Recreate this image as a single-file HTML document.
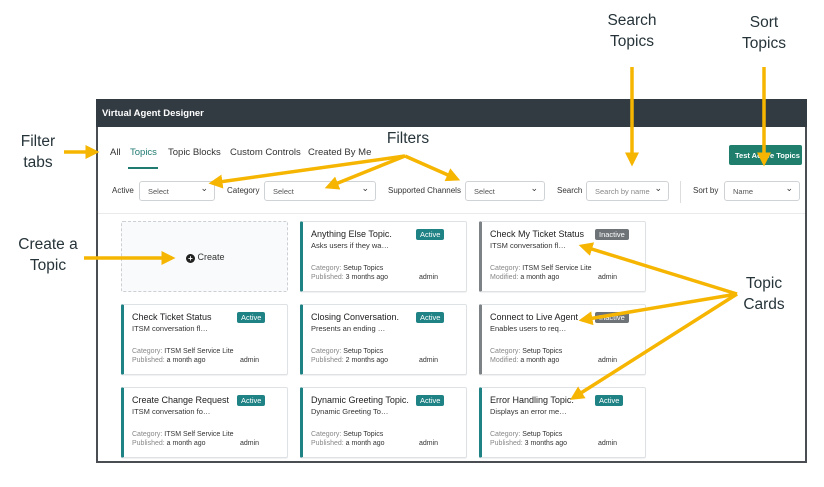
<!DOCTYPE html>
<html><head><meta charset="utf-8"><style>
*{margin:0;padding:0;box-sizing:border-box}
body{width:824px;height:487px;background:#fff;position:relative;overflow:hidden;font-family:"Liberation Sans",sans-serif;color:#2a3236}
.a{position:absolute}
.lbl{position:absolute;font-size:15.5px;color:#26343a;text-align:center;line-height:21px}
.frame{left:96px;top:99px;width:711px;height:364px;border:2px solid #4a4e52;border-top:none;background:#fff}
.hdr{left:96px;top:99px;width:711px;height:28px;background:#323a42;color:#fff;font-size:9.5px;font-weight:bold;padding:9px 0 0 6px}
.tab{position:absolute;top:147px;font-size:9.5px;color:#333}
.f{position:absolute;font-size:8px;color:#333}
.sel{position:absolute;height:20px;border:1px solid #cfd3d6;border-radius:3px;background:#fff;font-size:7.5px;color:#555;padding:5px 0 0 8px}
.sel:after{content:"⌄";position:absolute;right:6px;top:1px;font-size:9px;color:#333}
.card{position:absolute;width:167px;height:71px;border:1px solid #dfe2e4;border-left:3px solid #1f8285;border-radius:2px;background:#fff;box-shadow:0 1px 1px rgba(0,0,0,.06)}
.card.g{border-left-color:#7d8287}
.t{position:absolute;left:8px;top:7px;font-size:9px;color:#222}
.d{position:absolute;left:8px;top:19px;font-size:7.5px;color:#333}
.b{position:absolute;left:113px;top:7px;height:11px;padding:0 4px;background:#1f8285;color:#fff;font-size:7.5px;border-radius:2px;line-height:11px}
.b.i{background:#6e7378}
.c1{position:absolute;left:8px;top:43px;font-size:7px;color:#333}
.c2{position:absolute;left:8px;top:52px;font-size:7px;color:#333}
.c1 span,.c2 span{color:#888}
.ad{position:absolute;left:116px;top:52px;font-size:7px;color:#333}
</style></head><body>
<div class="a frame"></div>
<div class="a hdr">Virtual Agent Designer</div>
<div class="tab" style="left:110px">All</div>
<div class="tab" style="left:130px;color:#1f7a70">Topics</div>
<div class="a" style="left:128px;top:167px;width:30px;height:2px;background:#1f7a70"></div>
<div class="tab" style="left:168px">Topic Blocks</div>
<div class="tab" style="left:230px">Custom Controls</div>
<div class="tab" style="left:308px">Created By Me</div>
<div class="a" style="left:729px;top:145px;width:73px;height:20px;background:#1f7f6c;border-radius:2px;color:#fff;font-size:7.5px;font-weight:bold;padding:6px 0 0 6px">Test Active Topics</div>
<div class="f" style="left:112px;top:186px">Active</div>
<div class="sel" style="left:139px;top:181px;width:76px">Select</div>
<div class="f" style="left:227px;top:186px">Category</div>
<div class="sel" style="left:264px;top:181px;width:112px">Select</div>
<div class="f" style="left:388px;top:186px">Supported Channels</div>
<div class="sel" style="left:465px;top:181px;width:80px">Select</div>
<div class="f" style="left:557px;top:186px">Search</div>
<div class="sel" style="left:586px;top:181px;width:83px;color:#888">Search by name</div>
<div class="a" style="left:680px;top:181px;width:1px;height:22px;background:#ddd"></div>
<div class="f" style="left:693px;top:186px">Sort by</div>
<div class="sel" style="left:724px;top:181px;width:76px">Name</div>
<div class="a" style="left:98px;top:213px;width:707px;height:1px;background:#e8eaec"></div>
<div class="a" style="left:121px;top:221px;width:167px;height:71px;border:1px dashed #ccd0d4;background:#f9fafb;border-radius:2px"></div>
<div class="a" style="left:186px;top:252px;font-size:9px;color:#333"><span style="display:inline-block;width:9px;height:9px;border-radius:50%;background:#222;color:#fff;font-size:8px;line-height:9px;text-align:center;font-weight:bold;vertical-align:-1px">+</span> Create</div>

<div class="card" style="left:300px;top:221px"><div class="t">Anything Else Topic.</div><div class="b">Active</div><div class="d">Asks users if they wa…</div><div class="c1"><span>Category:</span> Setup Topics</div><div class="c2"><span>Published:</span> 3 months ago</div><div class="ad">admin</div></div>
<div class="card g" style="left:479px;top:221px"><div class="t">Check My Ticket Status</div><div class="b i">Inactive</div><div class="d">ITSM conversation fl…</div><div class="c1"><span>Category:</span> ITSM Self Service Lite</div><div class="c2"><span>Modified:</span> a month ago</div><div class="ad">admin</div></div>
<div class="card" style="left:121px;top:304px"><div class="t">Check Ticket Status</div><div class="b">Active</div><div class="d">ITSM conversation fl…</div><div class="c1"><span>Category:</span> ITSM Self Service Lite</div><div class="c2"><span>Published:</span> a month ago</div><div class="ad">admin</div></div>
<div class="card" style="left:300px;top:304px"><div class="t">Closing Conversation.</div><div class="b">Active</div><div class="d">Presents an ending …</div><div class="c1"><span>Category:</span> Setup Topics</div><div class="c2"><span>Published:</span> 2 months ago</div><div class="ad">admin</div></div>
<div class="card g" style="left:479px;top:304px"><div class="t">Connect to Live Agent</div><div class="b i">Inactive</div><div class="d">Enables users to req…</div><div class="c1"><span>Category:</span> Setup Topics</div><div class="c2"><span>Modified:</span> a month ago</div><div class="ad">admin</div></div>
<div class="card" style="left:121px;top:387px"><div class="t">Create Change Request</div><div class="b">Active</div><div class="d">ITSM conversation fo…</div><div class="c1"><span>Category:</span> ITSM Self Service Lite</div><div class="c2"><span>Published:</span> a month ago</div><div class="ad">admin</div></div>
<div class="card" style="left:300px;top:387px"><div class="t">Dynamic Greeting Topic.</div><div class="b">Active</div><div class="d">Dynamic Greeting To…</div><div class="c1"><span>Category:</span> Setup Topics</div><div class="c2"><span>Published:</span> a month ago</div><div class="ad">admin</div></div>
<div class="card" style="left:479px;top:387px"><div class="t">Error Handling Topic.</div><div class="b">Active</div><div class="d">Displays an error me…</div><div class="c1"><span>Category:</span> Setup Topics</div><div class="c2"><span>Published:</span> 3 months ago</div><div class="ad">admin</div></div>

<div class="lbl" style="left:8px;top:131px;width:60px">Filter<br>tabs</div>
<div class="lbl" style="left:8px;top:234px;width:80px">Create a<br>Topic</div>
<div class="lbl" style="left:378px;top:128px;width:60px">Filters</div>
<div class="lbl" style="left:598px;top:10px;width:68px">Search<br>Topics</div>
<div class="lbl" style="left:732px;top:12px;width:64px">Sort<br>Topics</div>
<div class="lbl" style="left:730px;top:273px;width:68px">Topic<br>Cards</div>

<svg class="a" style="left:0;top:0" width="824" height="487">
<defs><marker id="m" markerWidth="4" markerHeight="4" refX="3" refY="2" orient="auto" markerUnits="strokeWidth"><path d="M0,0 L4,2 L0,4 Z" fill="#f6b500"/></marker></defs>
<g stroke="#f6b500" stroke-width="3.5" fill="none" marker-end="url(#m)">
<line x1="64" y1="152" x2="96" y2="152"/>
<line x1="84" y1="258" x2="172" y2="258"/>
<line x1="405" y1="156" x2="212" y2="183"/>
<line x1="405" y1="156" x2="328" y2="187"/>
<line x1="405" y1="156" x2="457" y2="179"/>
<line x1="632" y1="67" x2="632" y2="163"/>
<line x1="764" y1="67" x2="764" y2="163"/>
<line x1="737" y1="294" x2="582" y2="246"/>
<line x1="737" y1="294" x2="582" y2="320"/>
<line x1="737" y1="294" x2="573" y2="398"/>
</g></svg>
</body></html>
